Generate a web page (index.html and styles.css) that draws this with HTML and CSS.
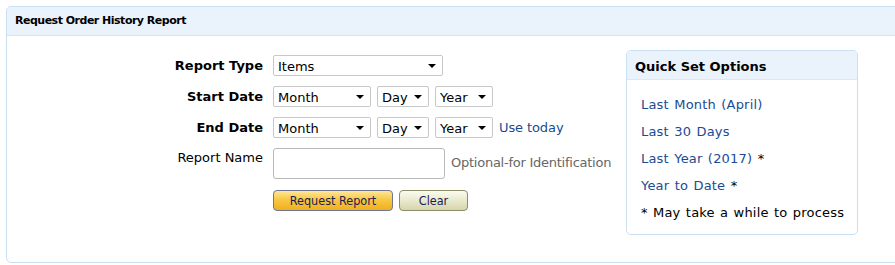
FILE: index.html
```html
<!DOCTYPE html>
<html>
<head>
<meta charset="utf-8">
<link rel="stylesheet" href="styles.css">
</head>
<body>
<div class="panel">
  <div class="panel-head">Request Order History Report</div>
  <div class="panel-body">
    <div class="form">
      <div class="row">
        <div class="label bold">Report Type</div>
        <div class="fields">
          <div class="select w-type"><span>Items</span><i class="arrow"></i></div>
        </div>
      </div>
      <div class="row">
        <div class="label bold">Start Date</div>
        <div class="fields">
          <div class="select w-month"><span>Month</span><i class="arrow"></i></div>
          <div class="select w-day"><span>Day</span><i class="arrow"></i></div>
          <div class="select w-year"><span>Year</span><i class="arrow"></i></div>
        </div>
      </div>
      <div class="row">
        <div class="label bold">End Date</div>
        <div class="fields">
          <div class="select w-month"><span>Month</span><i class="arrow"></i></div>
          <div class="select w-day"><span>Day</span><i class="arrow"></i></div>
          <div class="select w-year"><span>Year</span><i class="arrow"></i></div>
          <a class="link today">Use today</a>
        </div>
      </div>
      <div class="row row-name">
        <div class="label">Report Name</div>
        <div class="fields">
          <div class="textbox"></div>
          <span class="hint">Optional-for Identification</span>
        </div>
      </div>
      <div class="row row-btn">
        <div class="label"></div>
        <div class="fields">
          <div class="btn btn-primary">Request Report</div>
          <div class="btn btn-clear">Clear</div>
        </div>
      </div>
    </div>
    <div class="quick">
      <div class="quick-head">Quick Set Options</div>
      <div class="quick-body">
        <div class="qitem"><a class="link">Last Month (April)</a></div>
        <div class="qitem"><a class="link">Last 30 Days</a></div>
        <div class="qitem"><a class="link">Last Year (2017)</a> *</div>
        <div class="qitem"><a class="link">Year to Date</a> *</div>
        <div class="qitem">* May take a while to process</div>
      </div>
    </div>
  </div>
</div>
</body>
</html>
```
FILE: styles.css
```css
html, body {
  margin: 0;
  padding: 0;
  background: #fff;
}
body {
  font-family: "DejaVu Sans", Verdana, sans-serif;
  font-size: 13px;
  color: #000;
}
.panel {
  margin: 6px 0 0 6px;
  width: 900px;
  height: 257px;
  border: 1px solid #c9dff2;
  border-radius: 5px;
  box-sizing: border-box;
  overflow: hidden;
}
.panel-head {
  height: 28px;
  background: #eaf2fc;
  border-bottom: 1px solid #d3e4f5;
  font-size: 11px;
  letter-spacing: -0.5px;
  font-weight: bold;
  line-height: 28px;
  padding-left: 8px;
}
.panel-body {
  display: flex;
  align-items: flex-start;
}
.form {
  width: 612px;
  padding-top: 19px;
  display: flex;
  flex-direction: column;
}
.row {
  display: flex;
  align-items: center;
  height: 21px;
  margin-bottom: 10px;
}
.row-name {
  height: 30px;
  align-items: flex-start;
  margin-bottom: 12px;
}
.row-name .label { line-height: 20px; }
.row-btn { height: 21px; }
.label {
  width: 256px;
  text-align: right;
  padding-right: 10px;
  flex: none;
  white-space: nowrap;
}
.bold { font-weight: bold; }
.fields {
  display: flex;
  align-items: center;
  gap: 6px;
}
.select {
  position: relative;
  height: 21px;
  box-sizing: border-box;
  border: 1px solid #c8c8c8;
  border-radius: 2px;
  background: #fff;
  padding-left: 4px;
  line-height: 21px;
  font-size: 13px;
}
.arrow {
  position: absolute;
  right: 6px;
  top: 8px;
  width: 0;
  height: 0;
  border-left: 4px solid transparent;
  border-right: 4px solid transparent;
  border-top: 4px solid #000;
}
.w-type { width: 170px; }
.w-month { width: 98px; }
.w-day { width: 52px; }
.w-year { width: 58px; }
.link {
  color: #1a4b94;
  text-decoration: none;
}
.today { margin-left: 0; letter-spacing: -0.1px; }
.textbox {
  width: 172px;
  height: 31px;
  box-sizing: border-box;
  border: 1px solid #b8b8b8;
  border-radius: 3px;
  background: #fff;
}
.hint {
  color: #666;
  margin-top: -2px;
  align-self: center;
  letter-spacing: -0.25px;
}
.btn {
  height: 21px;
  box-sizing: border-box;
  border-radius: 4px;
  font-family: "DejaVu Sans Condensed", "Liberation Sans Narrow", sans-serif;
  font-size: 12.5px;
  color: #1b1b55;
  text-align: center;
  line-height: 19px;
}
.btn-primary {
  width: 120px;
  border: 1px solid #6f7394;
  background: linear-gradient(#fde79a 0%, #f8c842 45%, #efb01f 100%);
}
.btn-clear {
  width: 69px;
  border: 1px solid #8c8c68;
  background: linear-gradient(#fbfbef 0%, #e9e9cd 50%, #d5d5ad 100%);
}
.quick {
  margin-left: 7px;
  margin-top: 14px;
  width: 232px;
  height: 185px;
  box-sizing: border-box;
  border: 1px solid #c9dff2;
  border-radius: 5px;
  overflow: hidden;
}
.quick-head {
  height: 29px;
  background: #eaf2fc;
  border-bottom: 1px solid #dbe8f5;
  font-weight: bold;
  line-height: 31px;
  padding-left: 8px;
  box-sizing: border-box;
}
.quick-body {
  padding: 13px 0 0 14px;
  letter-spacing: 0.2px;
  word-spacing: 1px;
}
.qitem {
  height: 27px;
  line-height: 24px;
  white-space: nowrap;
}
```
